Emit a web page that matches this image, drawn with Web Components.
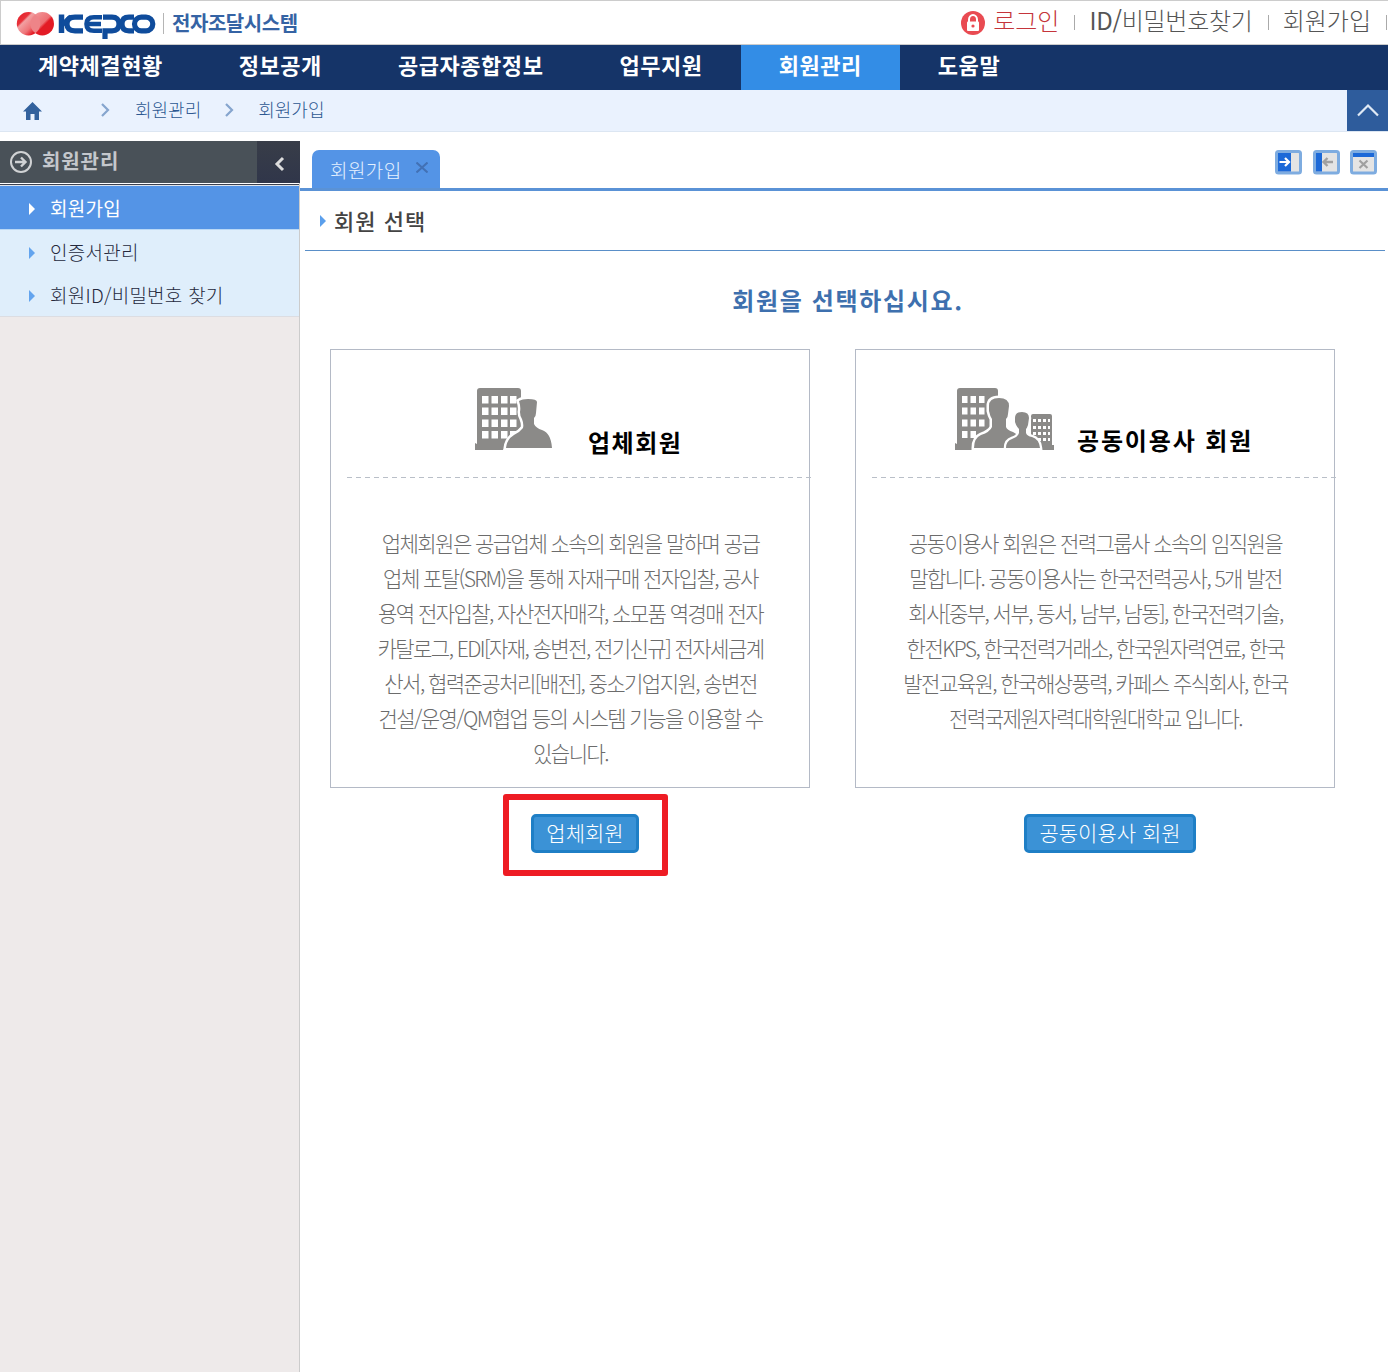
<!DOCTYPE html>
<html lang="ko">
<head>
<meta charset="utf-8">
<title>전자조달시스템</title>
<style>
  body {
    margin: 0;
    background: #fff;
    font-family: "Noto Sans CJK KR", sans-serif;
    font-weight: 300;
  }
</style>
</head>
<body>
<srm-app></srm-app>

<script>
class BaseElement extends HTMLElement {
  constructor() {
    super();
    const template = document.createElement("template");
    template.innerHTML = this.constructor.html;
    this.attachShadow({ mode: "open" });
    this.shadowRoot.appendChild(template.content.cloneNode(true));
  }
}

class SrmLogo extends BaseElement {
  static html = `
<style>
  :host { display: flex; align-items: center; height: 43px; padding-left: 15px; }
  svg { display: block; }
  .bar { width: 1px; height: 21px; background: #b5b5b5; margin: 2px 8px 0 7px; }
  .name {
    font-size: 20px;
    line-height: 30px;
    font-weight: 700;
    letter-spacing: -0.45px;
    color: #3563a4;
  }
</style>
<svg width="140" height="32" viewBox="16 7 140 32">
  <defs>
    <linearGradient id="l" x1="0" y1="0" x2="1" y2="1">
      <stop offset="0" stop-color="#e31b25"/><stop offset=".3" stop-color="#e8323a"/><stop offset=".36" stop-color="#f2a0a2"/><stop offset=".62" stop-color="#ee7478"/><stop offset=".8" stop-color="#e31b25"/>
    </linearGradient>
    <linearGradient id="r" x1="0" y1="0" x2="1" y2="1">
      <stop offset="0" stop-color="#f2a0a2"/><stop offset=".5" stop-color="#ee7074"/><stop offset=".58" stop-color="#e31b25"/><stop offset="1" stop-color="#e31b25"/>
    </linearGradient>
  </defs>
  <circle cx="28.5" cy="23.7" r="11.7" fill="url(#l)"/>
  <circle cx="42.3" cy="23.7" r="11.7" fill="url(#r)"/>
  <path d="M35.400 14.500q-5 4-5 9.200t5 9.200q5-4 5-9.200t-5-9.200z" fill="#ee8488"/>
  <g fill="none" stroke="#0f4c9c" stroke-width="5.200">
    <path d="M61.500 14.500v18.500" stroke-width="5.500"/>
    <path d="M83 17.200h-8q-8 0-8 6.800t8 6.800h8"/>
    <path d="M62 25l9-8.500" stroke-width="5"/>
    <path d="M102 17.200h-8q-7.500 0-7.500 6.800t7.500 6.800h8M87 24h14" stroke-width="4.600"/>
    <path d="M105 39V30.800h7q7 0 7-6.800t-7-6.800h-9"/>
    <path d="M134 17.200h-5q-7 0-7 6.800t7 6.800h5"/>
    <rect x="134.500" y="17.200" width="18.300" height="13.600" rx="6.800"/>
  </g>
</svg>
<span class="bar"></span>
<span class="name">전자조달시스템</span>
`;
}

class TopHeader extends BaseElement {
  static html = `
<style>
  :host {
    display: flex;
    justify-content: space-between;
    box-sizing: border-box;
    height: 45px;
    border: 1px solid #ccc;
    border-right: 0;
  }
  nav { display: flex; height: 38px; align-items: center; font-size: 24px; line-height: 38px; color: #555; white-space: nowrap; }
  .lock { margin: 6px 8px 0 0; }
  .login { color: #c5353b; }
  i { width: 1px; height: 15px; margin: 5px 14px 0 15px; background: #aaa; }
  i:last-child { margin: 5px 1px 0 14px; }
  .id { letter-spacing: -0.25px; }
  .id b { font-weight: 400; }
  .join { margin-right: 1px; }
</style>
<srm-logo></srm-logo>
<nav>
  <svg class="lock" width="24" height="24" viewBox="0 0 24 24">
    <circle cx="12" cy="12" r="12" fill="#e94b52"/>
    <path d="M8 11V8.500a4 4.500 0 0 1 8 0V11" fill="none" stroke="#fff" stroke-width="2"/>
    <rect x="6" y="10.500" width="12" height="9.500" rx="1" fill="#fff"/>
    <circle cx="12" cy="15" r="1.600" fill="#e94b52"/>
  </svg>
  <span class="login">로그인</span><i></i>
  <span class="id"><b>ID/</b>비밀번호찾기</span><i></i>
  <span class="join">회원가입</span><i></i>
</nav>
`;
}

class MainMenu extends BaseElement {
  static html = `
<style>
  :host { display: flex; height: 45px; background: #153468; }
  ::slotted(a) {
    padding: 0 38px;
    height: 45px;
    font-size: 22px;
    line-height: 39px;
    font-weight: 700;
    letter-spacing: 0.55px;
    color: #fff;
    white-space: nowrap;
  }
  ::slotted(a.active) { background: #338de6; }
</style>
<slot></slot>
`;
}

class BreadCrumb extends BaseElement {
  static html = `
<style>
  :host {
    display: flex;
    box-sizing: border-box;
    height: 42px;
    background: #eaf2fe;
    border-bottom: 1px solid #dce6f2;
    color: #2d5891;
    font-size: 18px;
    line-height: 39px;
  }
  .home { margin: 12px 58px 0 23px; }
  .arrow { margin: 13px 25px 0 0; }
  .arrow.second { margin: 13px 24px 0 23px; }
  .up { margin-left: auto; width: 41px; height: 41px; background: #2e5c9c; }
</style>
<svg class="home" width="19" height="18" viewBox="0 0 19 18"><path d="M9.500 0L19 9.500h-3V18h-4.500v-6h-4v6H3V9.500H0z" fill="#32619d"/></svg>
<svg class="arrow" width="10" height="14" viewBox="0 0 10 14"><path d="M2 1l6 6-6 6" fill="none" stroke="#86a5ce" stroke-width="2.200"/></svg>
<span>회원관리</span>
<svg class="arrow second" width="10" height="14" viewBox="0 0 10 14"><path d="M2 1l6 6-6 6" fill="none" stroke="#86a5ce" stroke-width="2.200"/></svg>
<span>회원가입</span>
<svg class="up" viewBox="0 0 41 41"><path d="M11 25.500L21 15.500l10 10" fill="none" stroke="#dfe9f5" stroke-width="2.200"/></svg>
`;
}

class SideItem extends BaseElement {
  static html = `
<style>
  :host {
    display: flex;
    align-items: center;
    height: 43px;
    padding-left: 29px;
    font-size: 19px;
    line-height: 43px;
    color: #25293d;
    --mark: #63a4ee;
  }
  :host([active]) {
    height: 43px;
    background: #5494e6;
    border-bottom: 1px solid #b9d8f6;
    color: #fff;
    font-weight: 400;
    --mark: #fff;
  }
  svg { margin: 3px 15px 0 0; fill: var(--mark); }
  span { letter-spacing: 0.25px; }
</style>
<svg width="6" height="12" viewBox="0 0 6 12"><path d="M0 0l6 6-6 6z"/></svg>
<span><slot></slot></span>
`;
}

class SideBar extends BaseElement {
  static html = `
<style>
  :host { display: block; box-sizing: border-box; width: 300px; background: #eeeaea; border-right: 1px solid #ccc; }
  header {
    display: flex;
    width: 300px;
    height: 42px;
    background: #495158;
    color: #c4c7cc;
    font-size: 20px;
    line-height: 39px;
    font-weight: 700;
    letter-spacing: 0.9px;
  }
  .go { margin: 9px 9px 0 9px; }
  .fold { margin-left: auto; background: linear-gradient(#383d48, #30364a); }
  .rule { height: 1px; border-top: 1px solid #fff; background: #3d4250; border-bottom: 1px solid #e0e4ea; }
  .list { background: #dfeefb; border-bottom: 1px solid #dcdde2; }
</style>
<header>
  <svg class="go" width="24" height="24" viewBox="0 0 24 24" fill="none" stroke="#d0d2d4">
    <circle cx="12" cy="12" r="10" stroke-width="2"/>
    <path d="M6 12h10M12 7.500l4.500 4.500-4.500 4.500" stroke-width="2.400"/>
  </svg>
  <span>회원관리</span>
  <svg class="fold" width="43" height="42" viewBox="0 0 43 42"><path d="M26 17l-6 6 6 6" fill="none" stroke="#ddd" stroke-width="3"/></svg>
</header>
<div class="rule"></div>
<div class="list"><slot></slot></div>
`;
}

class TabBar extends BaseElement {
  static html = `
<style>
  :host {
    display: flex;
    justify-content: space-between;
    box-sizing: border-box;
    height: 50px;
    padding: 9px 10px 0 12px;
    border-bottom: 3px solid #5a92d6;
  }
  .tab {
    display: flex;
    box-sizing: border-box;
    width: 128px;
    height: 38px;
    padding-left: 18px;
    border-radius: 7px 7px 0 0;
    background: #5494e6;
    color: #e5f1ff;
    font-size: 19px;
    line-height: 39px;
    letter-spacing: 0.4px;
  }
  .tab svg { margin: 12px 0 0 14px; }
  .tools { display: flex; gap: 10px; }
</style>
<div class="tab">
  <span>회원가입</span>
  <svg width="12" height="11" viewBox="0 0 12 11"><path d="M.5.500l11 10M11.500.500l-11 10" stroke="#4271b5" stroke-width="2"/></svg>
</div>
<div class="tools">
  <svg width="28" height="25" viewBox="0 0 28 25">
    <rect x="1.500" y="1.500" width="24" height="21.500" rx="2" fill="#e4e4e4" stroke="#7eace0" stroke-width="3"/>
    <path d="M3 3h13v18.500H3z" fill="#1c69d8"/>
    <path d="M4.500 12h9M10 8l4 4-4 4" fill="none" stroke="#fff" stroke-width="2.200"/>
  </svg>
  <svg width="27" height="25" viewBox="0 0 27 25">
    <rect x="1.500" y="1.500" width="24" height="21.500" rx="2" fill="#e4e4e4" stroke="#7eace0" stroke-width="3"/>
    <path d="M3 3h6v18.500H3z" fill="#1c69d8"/>
    <path d="M20 12h-9M14.500 8l-4 4 4 4" fill="none" stroke="#a0a0a0" stroke-width="2.400"/>
  </svg>
  <svg width="28" height="25" viewBox="0 0 28 25">
    <rect x="1.500" y="1.500" width="24" height="21.500" rx="2" fill="#e4e4e4" stroke="#7eace0" stroke-width="3"/>
    <path d="M3 3h21v4H3z" fill="#1c69d8"/>
    <path d="M9.500 10.500l8 7.500M17.500 10.500l-8 7.500" stroke="#a0a0a0" stroke-width="2.200"/>
  </svg>
</div>
`;
}

class PageTitle extends BaseElement {
  static html = `
<style>
  :host {
    display: flex;
    align-items: center;
    height: 59px;
    margin: 0 3px 0 5px;
    padding-left: 15px;
    border-bottom: 1px solid #5a8fc8;
  }
  svg { margin-right: 8px; }
  span { font-size: 22px; font-weight: 500; color: #444; letter-spacing: 1.05px; line-height: 59px; }
</style>
<svg width="6" height="12" viewBox="0 0 6 12"><path d="M0 0l6 6-6 6z" fill="#5b9fec"/></svg>
<span><slot></slot></span>
`;
}

class MemberCard extends BaseElement {
  static html = `
<style>
  :host { display: block; width: 480px; }
  .box { box-sizing: border-box; height: 439px; border: 1px solid #b4bac6; padding-left: 16px; }
  header { display: flex; box-sizing: border-box; height: 127px; width: 464px; }
  h3 { margin: 0; font-size: 24px; font-weight: 700; color: #000; white-space: nowrap; line-height: 36px; }
  .dash { height: 1px; width: 464px; background: repeating-linear-gradient(90deg, #b9bfc8 0 5px, transparent 5px 9px); }
  p {
    margin: 48px 15px 0 0;
    text-align: center;
    font-size: 21.1px;
    line-height: 35px;
    letter-spacing: -1.6px;
    color: #6c6c6c;
    white-space: nowrap;
  }
  .action { display: flex; justify-content: center; padding: 26px 0 0 30px; }
  button {
    height: 39px;
    padding: 0 12px 2px;
    border: 3px solid #1f7fc6;
    border-radius: 5px;
    background: #3b92d6;
    color: #fff;
    font: inherit;
    font-size: 21px;
    line-height: 29px;
  }
  /* company */
  .group { display: none; }
  .company, .group { margin-top: 38px; flex: none; }
  .company { margin-left: 128px; }
  h3 { margin: 74px 0 0 35px; letter-spacing: 1.5px; }
  /* group */
  :host([kind="group"]) .company { display: none; }
  :host([kind="group"]) .group { display: block; margin-left: 83px; }
  :host([kind="group"]) h3 { margin: 72px 0 0 22px; letter-spacing: 1.85px; }
</style>
<div class="box">
  <header>
    <svg class="company" width="78" height="63" viewBox="0 0 78 63">
      <path d="M2 56V3q0-3 3-3h38q3 0 3 3v36L28 62H0v-7z" fill="#8b8a88"/>
      <path d="M7 8h6.500v7.500H7zM16.500 8H23v7.500h-6.500zM26 8h6.500v7.500H26zM35 8h6.500v7.500H35zM7 19.500h6.500V27H7zM16.500 19.500H23V27h-6.500zM26 19.500h6.500V27H26zM35 19.500h6.500V27H35zM7 31.500h6.500V39H7zM16.500 31.500H23V39h-6.500zM26 31.500h6.500V39H26zM35 31.500h6.500V39H35zM7 43h6.500v7.500H7zM16.500 43H23v7.500h-6.500zM26 43h6.500v7.500H26zM35 43h6.500v7.500H35z" fill="#fff"/>
      <path d="M44 13q3-2 9-2 9 0 9 3l-1 11q0 3-2 5v6q2 4 8 6 9 3 10 18H31q1-9 8-13 6-3 9-7 1-4-1-9-2-3-2-7 1-5-1-11z" fill="#8b8a88" stroke="#fff" stroke-width="5" paint-order="stroke"/>
    </svg>
    <svg class="group" width="100" height="63" viewBox="0 0 100 63">
      <path d="M2 56V3q0-3 3-3h35q3 0 3 3v36L18 62H0v-7z" fill="#8b8a88"/>
      <path d="M7 8h5.500v7H7zM15.500 8H21v7h-5.500zM24 8h5.500v7H24zM7 19.500h5.500v7H7zM15.500 19.500H21v7h-5.500zM24 19.500h5.500v7H24zM7 31.500h5.500v7H7zM15.500 31.500H21v7h-5.500zM24 31.500h5.500v7H24zM7 43h5.500v7H7zM15.500 43H21v7h-5.500z" fill="#fff"/>
      <path d="M76 28q0-2 2-2h17q2 0 2 2v29h2v5H76z" fill="#8b8a88"/>
      <path d="M78 31h3v3h-3zM83 31h3v3h-3zM88 31h3v3h-3zM93 31h2v3h-2zM78 38h3v3h-3zM83 38h3v3h-3zM88 38h3v3h-3zM93 38h2v3h-2zM78 44h3v3h-3zM83 44h3v3h-3zM88 44h3v3h-3zM93 44h2v3h-2zM83 50h3v3h-3zM88 50h3v3h-3zM93 50h2v3h-2z" fill="#fff"/>
      <path d="M34 18q0-8 10-8t10 8l-1 8q0 3-2 5v8q1 3 7 5 8 4 8 16H19q0-10 7-13 9-3 11-8v-8q-2-3-3-8z" fill="#8b8a88" stroke="#fff" stroke-width="5" paint-order="stroke"/>
      <path d="M60 30q0-6 7-6t7 6l-1 7q-1 3-2 4v4q1 3 6 4 7 2 8 11H51q0-7 6-9 6-2 7-6v-4q-3-3-4-7z" fill="#8b8a88" stroke="#fff" stroke-width="4.500" paint-order="stroke"/>
    </svg>
    <h3><slot name="title"></slot></h3>
  </header>
  <div class="dash"></div>
  <p><slot></slot></p>
</div>
<div class="action"><button><slot name="button"></slot></button></div>
`;
}

class MemberSelect extends BaseElement {
  static html = `
<style>
  :host { display: block; position: relative; }
  h2 {
    margin: 0;
    padding: 29px 0 30px 8px;
    text-align: center;
    font-size: 24px;
    line-height: 39px;
    font-weight: 700;
    letter-spacing: 1.65px;
    color: #3e70ae;
  }
  .cards { display: flex; gap: 45px; padding-left: 30px; }
  /* highlight frame round the first button */
  .frame {
    position: absolute;
    left: 203px;
    top: 543px;
    box-sizing: border-box;
    width: 165px;
    height: 82px;
    border: 6px solid #ee1c24;
    border-radius: 3px;
  }
</style>
<h2>회원을 선택하십시요.</h2>
<div class="cards">
  <member-card kind="company">
    <span slot="title">업체회원</span>
    업체회원은 공급업체 소속의 회원을 말하며 공급<br>업체 포탈(SRM)을 통해 자재구매 전자입찰, 공사<br>용역 전자입찰, 자산전자매각, 소모품 역경매 전자<br>카탈로그, EDI[자재, 송변전, 전기신규] 전자세금계<br>산서, 협력준공처리[배전], 중소기업지원, 송변전<br>건설/운영/QM협업 등의 시스템 기능을 이용할 수<br>있습니다.
    <span slot="button">업체회원</span>
  </member-card>
  <member-card kind="group">
    <span slot="title">공동이용사 회원</span>
    공동이용사 회원은 전력그룹사 소속의 임직원을<br>말합니다. 공동이용사는 한국전력공사, 5개 발전<br>회사[중부, 서부, 동서, 남부, 남동], 한국전력기술,<br>한전KPS, 한국전력거래소, 한국원자력연료, 한국<br>발전교육원, 한국해상풍력, 카페스 주식회사, 한국<br>전력국제원자력대학원대학교 입니다.
    <span slot="button">공동이용사 회원</span>
  </member-card>
</div>
<div class="frame"></div>
`;
}

class SrmApp extends BaseElement {
  static html = `
<style>
  :host { display: flex; flex-direction: column; height: 1372px; overflow: hidden; }
  .body { display: flex; flex: 1; padding-top: 9px; }
  main { flex: 1; }
</style>
<top-header></top-header>
<main-menu>
  <a>계약체결현황</a><a>정보공개</a><a>공급자종합정보</a><a>업무지원</a><a class="active">회원관리</a><a>도움말</a>
</main-menu>
<bread-crumb></bread-crumb>
<div class="body">
  <side-bar>
    <side-item active>회원가입</side-item>
    <side-item>인증서관리</side-item>
    <side-item>회원ID/비밀번호 찾기</side-item>
  </side-bar>
  <main>
    <tab-bar></tab-bar>
    <page-title>회원 선택</page-title>
    <member-select></member-select>
  </main>
</div>
`;
}

customElements.define("srm-logo", SrmLogo);
customElements.define("top-header", TopHeader);
customElements.define("main-menu", MainMenu);
customElements.define("bread-crumb", BreadCrumb);
customElements.define("side-item", SideItem);
customElements.define("side-bar", SideBar);
customElements.define("tab-bar", TabBar);
customElements.define("page-title", PageTitle);
customElements.define("member-card", MemberCard);
customElements.define("member-select", MemberSelect);
customElements.define("srm-app", SrmApp);
</script>
</body>
</html>
